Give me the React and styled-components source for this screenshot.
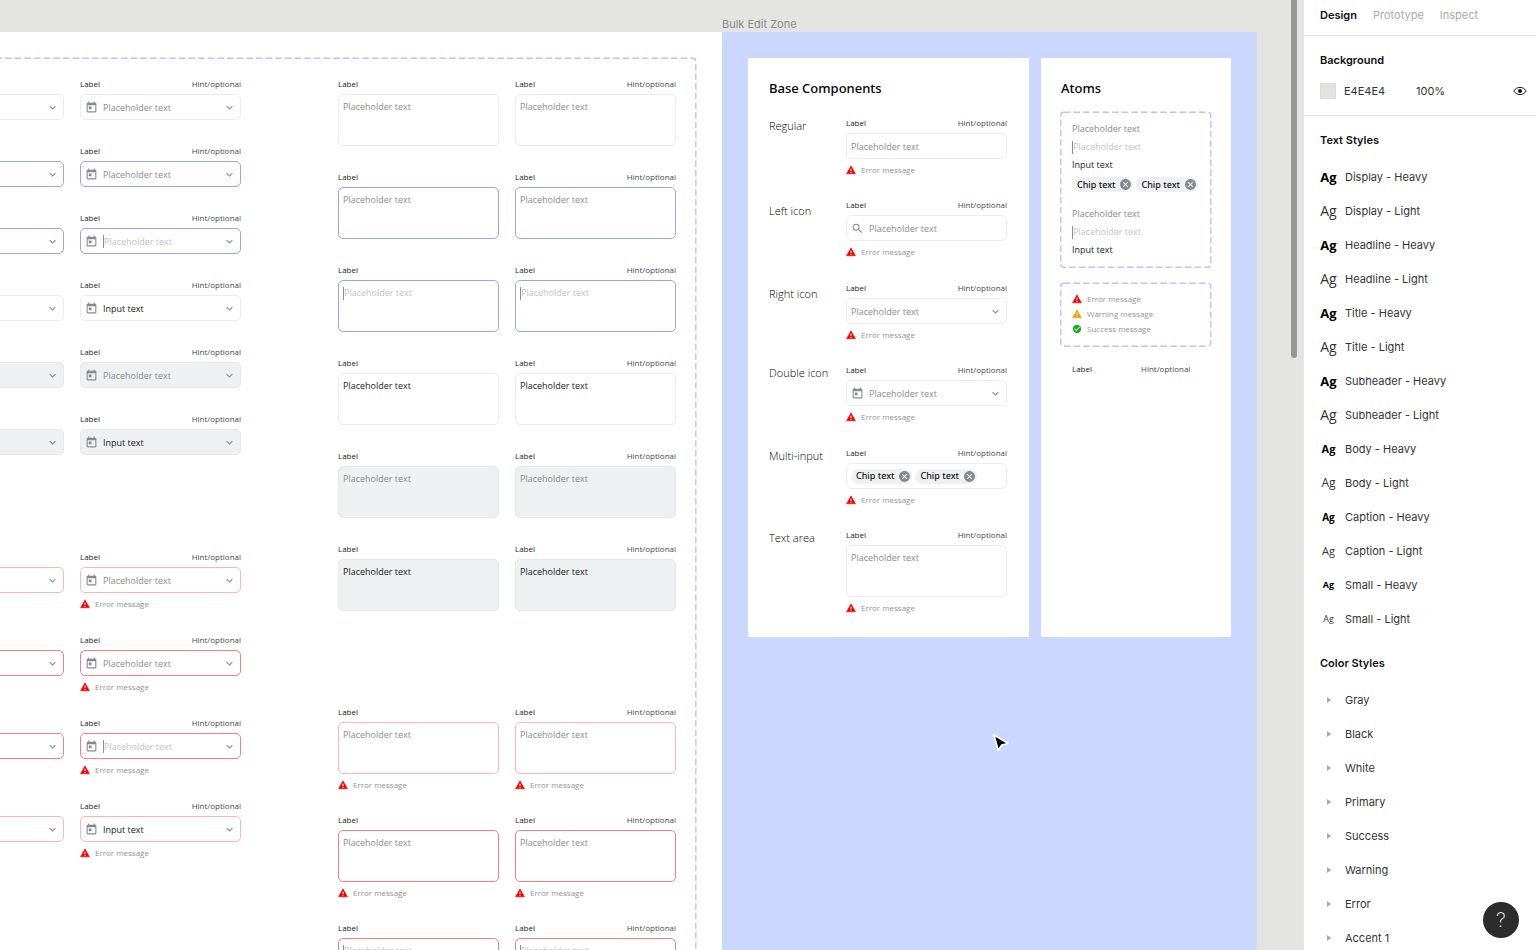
import React, { useId } from "react";
import styled, { createGlobalStyle, css } from "styled-components";
import { MdCancel, MdCheckCircle, MdKeyboardArrowDown, MdSearch, MdToday } from "react-icons/md";

const color = {
  canvas: "#e4e4e2",
  zone: "#ccd7ff",
  dash: "#c6bcff",
  ink: "#1b1b1b",
  text: "#8b8b8b",
  faint: "#c2c2c2",
  icon: "#858a90",
  fill: "#eef1f2",
  red: "#f40000",
  orange: "#f79a0c",
  green: "#17b01c",
};

const borders = {
  normal: "#eaecee",
  active: "#93a5ff",
  error: "#ffb4b6",
  errorActive: "#f97f84",
  disabled: "#e3e8ea",
};

const GlobalStyle = createGlobalStyle`
  * { box-sizing: border-box; }
  body { margin: 0; background: ${color.canvas}; }
  button, input, textarea {
    font: inherit;
    color: inherit;
    background: none;
    border: 0;
    border-radius: 0;
    padding: 0;
    margin: 0;
    outline: 0;
  }
  button { cursor: pointer; }
  ul { list-style: none; margin: 0; padding: 0; }
  h1, h2, p { margin: 0; }
`;

/* ---------- page shell ---------- */

const Page = styled.div`
  display: flex;
  height: 100vh;
  overflow: hidden;
  font-family: "Open Sans", "Noto Sans", sans-serif;
`;

const Canvas = styled.main`
  position: relative;
  display: flex;
  flex: 1;
  min-width: 0;
  padding-right: 46px;
  background: ${color.canvas};
  overflow: hidden;
`;

const Scrollbar = styled.div`
  position: absolute;
  top: -8px;
  right: 6px;
  width: 6px;
  height: 366px;
  border-radius: 3px;
  background: #98989a;
`;

/* ---------- dashed outline ---------- */

const DashBox = styled.div`
  position: relative;
`;

const DashSvg = styled.svg`
  position: absolute;
  inset: 0;
  width: 100%;
  height: 100%;
  overflow: visible;
  pointer-events: none;
`;

function DashFrame({ children, ...rest }) {
  return (
    <DashBox {...rest}>
      <DashSvg aria-hidden="true">
        <rect x="-0.2" y="0.3" width="100%" height="100%" rx="3" fill="none" stroke={color.dash} strokeWidth="1.4" strokeDasharray="6.6 3.05" />
      </DashSvg>
      {children}
    </DashBox>
  );
}

/* ---------- form field ---------- */

const FieldRoot = styled.div`
  width: 161px;
`;

const LabelRow = styled.div`
  display: flex;
  justify-content: space-between;
  height: 10px;
  margin-bottom: 5px;
  font-size: 8px;
  line-height: 10px;
`;

const Label = styled.label`
  color: ${color.ink};
  font-weight: 500;
`;

const Hint = styled.span`
  color: #484848;
`;

const Box = styled.div`
  display: flex;
  align-items: ${(p) => (p.$multiline ? "flex-start" : "center")};
  height: ${(p) => (p.$multiline ? 52 : 26)}px;
  padding: ${(p) => (p.$multiline ? "6px 4px 0" : "0 4px")};
  border: 1px solid ${(p) => borders[p.$tone]};
  border-radius: 5px;
  background: ${(p) => (p.$tone === "disabled" ? color.fill : "#fff")};
  font-size: 9px;
  line-height: 12px;
  color: ${color.icon};
  svg { flex: none; }
`;

const Caret = styled.i`
  flex: none;
  width: 1px;
  height: 13px;
  background: #8d8d8d;
`;

const control = css`
  flex: 1;
  min-width: 0;
  width: 100%;
  color: ${color.ink};
  opacity: 1;
  &::placeholder {
    color: ${(p) => (p.$faint ? color.faint : color.text)};
    opacity: 1;
  }
`;

const TextInput = styled.input`
  ${control}
  height: 14px;
`;

const TextArea = styled.textarea`
  ${control}
  height: 38px;
  resize: none;
  overflow: hidden;
`;

const IconSlot = styled.span`
  display: flex;
  margin-right: 5px;
`;

const MessageRow = styled.p`
  display: flex;
  align-items: center;
  gap: 5px;
  height: 11px;
  font-size: 8px;
  line-height: 11px;
  color: #929292;
`;

const FieldMessage = styled(MessageRow)`
  margin-top: 5px;
`;

function Triangle({ fill }) {
  return (
    <svg width="10" height="10" viewBox="0 0 20 20" aria-hidden="true">
      <path d="M10 1.6 L19 17.6 H1 Z" fill={fill} stroke={fill} strokeWidth="1" strokeLinejoin="round" />
      <path d="M10 7.4 V12.4 M10 13.8 V15.8" stroke="#fff" strokeWidth="2" fill="none" />
    </svg>
  );
}

function Message({ as: Row = MessageRow, kind = "error" }) {
  const text = { error: "Error message", warning: "Warning message", success: "Success message" }[kind];
  return (
    <Row>
      {kind === "success" ? (
        <MdCheckCircle size={10} color={color.green} />
      ) : (
        <Triangle fill={kind === "error" ? color.red : color.orange} />
      )}
      {text}
    </Row>
  );
}

const ChipRow = styled.div`
  display: flex;
  gap: 3px;
`;

const ChipBody = styled.span`
  display: flex;
  align-items: center;
  gap: 4px;
  height: 15px;
  padding: 0 1px 0 5px;
  border-radius: 8px;
  background: ${color.fill};
  color: #111;
  font-family: "Noto Sans", sans-serif;
  font-size: 9px;
  font-weight: 500;
  line-height: 12px;
  white-space: nowrap;
`;

const ChipClose = styled.button`
  display: flex;
  color: ${color.icon};
`;

function Chip() {
  return (
    <ChipBody>
      Chip text
      <ChipClose type="button" aria-label="Remove chip">
        <MdCancel size={13} />
      </ChipClose>
    </ChipBody>
  );
}

function Field({ tone = "normal", bare, hint = true, multiline, icon, chevron, value, caret, error, chips }) {
  const id = useId();
  const shared = {
    id,
    $faint: caret,
    defaultValue: bare ? undefined : value,
    placeholder: chips || bare ? undefined : "Placeholder text",
    "aria-label": bare ? "Right icon field" : undefined,
    disabled: tone === "disabled",
  };
  return (
    <FieldRoot>
      <LabelRow>
        {!bare && <Label htmlFor={id}>Label</Label>}
        {hint && !bare && <Hint>Hint/optional</Hint>}
      </LabelRow>
      <Box $tone={tone} $multiline={multiline}>
        {icon === "calendar" && <IconSlot><MdToday size={13} /></IconSlot>}
        {icon === "search" && <IconSlot><MdSearch size={13} /></IconSlot>}
        {caret && <Caret />}
        {chips && <ChipRow><Chip /><Chip /></ChipRow>}
        {multiline ? <TextArea {...shared} /> : <TextInput type="text" {...shared} />}
        {chevron && <MdKeyboardArrowDown size={13} />}
      </Box>
      {error && (bare ? <FieldMessage /> : <Message as={FieldMessage} />)}
    </FieldRoot>
  );
}

/* ---------- state sheet ---------- */

const Sheet = styled.section`
  display: flex;
  flex: 1;
  min-width: 0;
  margin-top: 32px;
  padding: 26px 26px 0 0;
  background: #fff;
  overflow: hidden;
`;

const SheetFrame = styled(DashFrame)`
  display: flex;
  flex: 1;
  justify-content: flex-end;
  gap: 97px;
  min-width: 0;
  min-height: 1100px;
  margin-left: -17px;
  padding: 21px 20px 0 0;
`;

const Pair = styled.div`
  display: flex;
  flex: none;
  gap: 16px;
`;

const Column = styled.div`
  display: flex;
  flex-direction: column;
  gap: ${(p) => (p.$multiline ? 96 : 97)}px;
`;

const Stack = styled.div`
  display: flex;
  flex-direction: column;
  gap: ${(p) => (p.$tight ? 25 : 26)}px;
`;

const states = [
  { tone: "normal" },
  { tone: "active" },
  { tone: "active", caret: true },
  { tone: "normal", filled: true },
  { tone: "disabled" },
  { tone: "disabled", filled: true },
];

const errorStates = [
  { tone: "error" },
  { tone: "errorActive" },
  { tone: "errorActive", caret: true },
  { tone: "error", filled: true },
];

function StateColumn({ hint, multiline, bare }) {
  const filledText = multiline ? "Placeholder text" : "Input text";
  const draw = (error) => ({ filled, ...state }, i) => (
    <Field
      key={i}
      {...state}
      bare={bare}
      hint={hint}
      multiline={multiline}
      icon={multiline || bare ? undefined : "calendar"}
      chevron={!multiline}
      value={filled ? filledText : undefined}
      error={error}
    />
  );
  return (
    <Column $multiline={multiline}>
      <Stack>{states.map(draw(false))}</Stack>
      <Stack $tight={multiline}>{errorStates.map(draw(true))}</Stack>
    </Column>
  );
}

/* ---------- bulk edit zone ---------- */

const ZoneColumn = styled.section`
  display: flex;
  flex: none;
  flex-direction: column;
  width: 535px;
`;

const ZoneTitle = styled.h1`
  height: 32px;
  padding-top: 16px;
  font: 400 11px/16px Inter, sans-serif;
  color: #8a8a8a;
`;

const ZoneBody = styled.div`
  position: relative;
  display: flex;
  flex: 1;
  align-items: flex-start;
  padding: 26px;
  background: ${color.zone};
`;

const Cards = styled.div`
  display: flex;
  flex: 1;
  gap: 12px;
`;

const Card = styled.section`
  flex: ${(p) => (p.$wide ? "0 0 281px" : "1")};
  padding: 21px 20px 24px;
  padding-left: ${(p) => (p.$wide ? 21 : 20)}px;
  background: #fff;
`;

const CardTitle = styled.h2`
  margin-bottom: 20px;
  font-family: "Noto Sans", sans-serif;
  font-size: 13px;
  font-weight: 500;
  line-height: 19px;
  color: #000;
`;

const Specimens = styled.div`
  display: flex;
  flex-direction: column;
  gap: 25px;
`;

const Specimen = styled.div`
  display: flex;
  &:nth-child(even):not(:last-child) { padding-bottom: 1px; }
`;

const SpecimenName = styled.span`
  flex: none;
  width: 77px;
  font-size: 11px;
  font-weight: 300;
  line-height: ${(p) => (p.$tall ? 22 : 16)}px;
  color: #000;
`;

const specimens = [
  { name: "Regular" },
  { name: "Left icon", tall: true, icon: "search" },
  { name: "Right icon", tall: true, chevron: true },
  { name: "Double icon", icon: "calendar", chevron: true },
  { name: "Multi-input", chips: true },
  { name: "Text area", multiline: true },
];

const AtomTexts = styled(DashFrame)`
  display: flex;
  flex-direction: column;
  gap: 16px;
  margin: -6px 0 16px;
  padding: 11px;
`;

const AtomGroup = styled.div`
  display: flex;
  flex-direction: column;
  gap: 6px;
`;

const AtomLine = styled.p`
  display: flex;
  align-items: center;
  height: 12px;
  font-size: 9px;
  line-height: 12px;
  color: ${(p) => (p.$faint ? color.faint : p.$ink ? color.ink : color.text)};
`;

const AtomMessages = styled(DashFrame)`
  display: flex;
  flex-direction: column;
  gap: 4px;
  margin-bottom: 17px;
  padding: 10px 11px 12px;
`;

const AtomLabels = styled.div`
  display: grid;
  grid-template-columns: 69px auto;
  padding-left: 11px;
  font-size: 8px;
  line-height: 11px;
`;

const LabelText = styled(Label).attrs({ as: "span" })``;

function AtomLines() {
  return (
    <>
      <AtomLine>Placeholder text</AtomLine>
      <AtomLine $faint><Caret />Placeholder text</AtomLine>
      <AtomLine $ink>Input text</AtomLine>
    </>
  );
}

const Pointer = styled.svg`
  position: absolute;
  left: 270px;
  top: 701px;
`;

/* ---------- inspector ---------- */

const Panel = styled.aside`
  position: relative;
  flex: none;
  width: 233px;
  border-left: 1px solid #e6e6e6;
  background: #fff;
  font: 400 11px/16px Inter, sans-serif;
  color: #333;
  overflow: hidden;
`;

const Tabs = styled.div`
  display: flex;
  align-items: center;
  gap: 16px;
  height: 36px;
  padding: 0 16px 6px;
  border-bottom: 1px solid #e5e5e5;
`;

const Tab = styled.button`
  font-weight: ${(p) => (p.$active ? 600 : 400)};
  color: ${(p) => (p.$active ? "#111" : "#aaa")};
`;

const PanelSection = styled.section`
  padding: 16px 9px 0 16px;
`;

const BackgroundSection = styled(PanelSection)`
  padding-bottom: 8px;
  border-bottom: 1px solid #e5e5e5;
`;

const PanelTitle = styled.h2`
  font-size: 11px;
  font-weight: 600;
  line-height: 16px;
  color: #111;
`;

const FillRow = styled.div`
  display: flex;
  align-items: center;
  height: 32px;
  margin-top: 7px;
`;

const Swatch = styled.span`
  width: 16px;
  height: 16px;
  margin-right: 8px;
  border: 1px solid #dcdcdc;
  background: #e2e2e1;
`;

const HexInput = styled.input`
  width: 72px;
`;

const OpacityInput = styled.input`
  width: 60px;
`;

const EyeButton = styled.button`
  display: flex;
  margin-left: auto;
  color: #111;
`;

const StyleList = styled.ul`
  margin: 12px 0 3px;
`;

const StyleRow = styled.button`
  display: grid;
  grid-template-columns: 17px auto;
  align-items: center;
  column-gap: 8px;
  width: 100%;
  height: 34px;
  text-align: left;
`;

const Sample = styled.span`
  font-family: "Open Sans", sans-serif;
  font-size: ${(p) => p.$size}px;
  font-weight: ${(p) => (p.$heavy ? 700 : 400)};
  text-align: center;
  color: ${(p) => (p.$heavy ? "#000" : "#333")};
`;

const Disclosure = styled.svg`
  justify-self: center;
`;

const HelpButton = styled.button`
  position: absolute;
  right: 17px;
  bottom: 12px;
  width: 36px;
  height: 36px;
  border-radius: 50%;
  background: #2c2c2c;
  color: #fff;
  font-size: 20px;
  font-weight: 200;
  line-height: 36px;
`;

const textStyles = [
  ["Display", 14],
  ["Headline", 14],
  ["Title", 14],
  ["Subheader", 14],
  ["Body", 12],
  ["Caption", 11],
  ["Small", 9],
];

const colorStyles = ["Gray", "Black", "White", "Primary", "Success", "Warning", "Error", "Accent 1"];

function Inspector() {
  return (
    <Panel>
      <Tabs role="tablist">
        <Tab role="tab" aria-selected="true" $active>Design</Tab>
        <Tab role="tab" aria-selected="false">Prototype</Tab>
        <Tab role="tab" aria-selected="false">Inspect</Tab>
      </Tabs>
      <BackgroundSection>
        <PanelTitle>Background</PanelTitle>
        <FillRow>
          <Swatch />
          <HexInput aria-label="Background color" defaultValue="E4E4E4" />
          <OpacityInput aria-label="Opacity" defaultValue="100%" />
          <EyeButton type="button" aria-label="Toggle visibility">
            <svg width="14" height="10" viewBox="0 0 14 10">
              <path d="M0.8 5 C3.6 0.2 10.4 0.2 13.2 5 C10.4 9.8 3.6 9.8 0.8 5 Z" fill="none" stroke="currentColor" strokeWidth="1" />
              <circle cx="7" cy="5" r="2" fill="currentColor" />
            </svg>
          </EyeButton>
        </FillRow>
      </BackgroundSection>
      <PanelSection>
        <PanelTitle>Text Styles</PanelTitle>
        <StyleList>
          {textStyles.flatMap(([name, size]) =>
            ["Heavy", "Light"].map((weight) => (
              <li key={name + weight}>
                <StyleRow type="button">
                  <Sample $size={weight === "Heavy" && size > 10 ? size - 1 : size} $heavy={weight === "Heavy"}>Ag</Sample>
                  <span>{name} - {weight}</span>
                </StyleRow>
              </li>
            ))
          )}
        </StyleList>
      </PanelSection>
      <PanelSection>
        <PanelTitle>Color Styles</PanelTitle>
        <StyleList>
          {colorStyles.map((name) => (
            <li key={name}>
              <StyleRow type="button" aria-expanded="false">
                <Disclosure width="4" height="6" viewBox="0 0 4 6" aria-hidden="true">
                  <path d="M0 0 L4 3 L0 6 Z" fill="#a6a6a6" />
                </Disclosure>
                <span>{name}</span>
              </StyleRow>
            </li>
          ))}
        </StyleList>
      </PanelSection>
      <HelpButton type="button" aria-label="Help">?</HelpButton>
    </Panel>
  );
}

/* ---------- app ---------- */

export default function App() {
  return (
    <Page>
      <GlobalStyle />
      <Canvas>
        <Sheet>
          <SheetFrame>
            <Pair>
              <StateColumn bare />
              <StateColumn hint />
            </Pair>
            <Pair>
              <StateColumn hint={false} multiline />
              <StateColumn hint multiline />
            </Pair>
          </SheetFrame>
        </Sheet>
        <ZoneColumn>
          <ZoneTitle>Bulk Edit Zone</ZoneTitle>
          <ZoneBody>
            <Cards>
              <Card $wide>
                <CardTitle>Base Components</CardTitle>
                <Specimens>
                  {specimens.map(({ name, tall, ...field }) => (
                    <Specimen key={name}>
                      <SpecimenName $tall={tall}>{name}</SpecimenName>
                      <Field {...field} error />
                    </Specimen>
                  ))}
                </Specimens>
              </Card>
              <Card>
                <CardTitle>Atoms</CardTitle>
                <AtomTexts>
                  <AtomGroup>
                    <AtomLines />
                    <ChipRow><Chip /><Chip /></ChipRow>
                  </AtomGroup>
                  <AtomGroup>
                    <AtomLines />
                  </AtomGroup>
                </AtomTexts>
                <AtomMessages>
                  <Message kind="error" />
                  <Message kind="warning" />
                  <Message kind="success" />
                </AtomMessages>
                <AtomLabels>
                  <LabelText>Label</LabelText>
                  <Hint>Hint/optional</Hint>
                </AtomLabels>
              </Card>
            </Cards>
            <Pointer width="18" height="20" viewBox="0 0 18 20" aria-hidden="true">
              <path d="M2 2 L6.2 17.4 L9.8 12 L16 10.4 Z" fill="#000" stroke="#fff" strokeWidth="1.6" strokeLinejoin="round" />
            </Pointer>
          </ZoneBody>
        </ZoneColumn>
        <Scrollbar />
      </Canvas>
      <Inspector />
    </Page>
  );
}
